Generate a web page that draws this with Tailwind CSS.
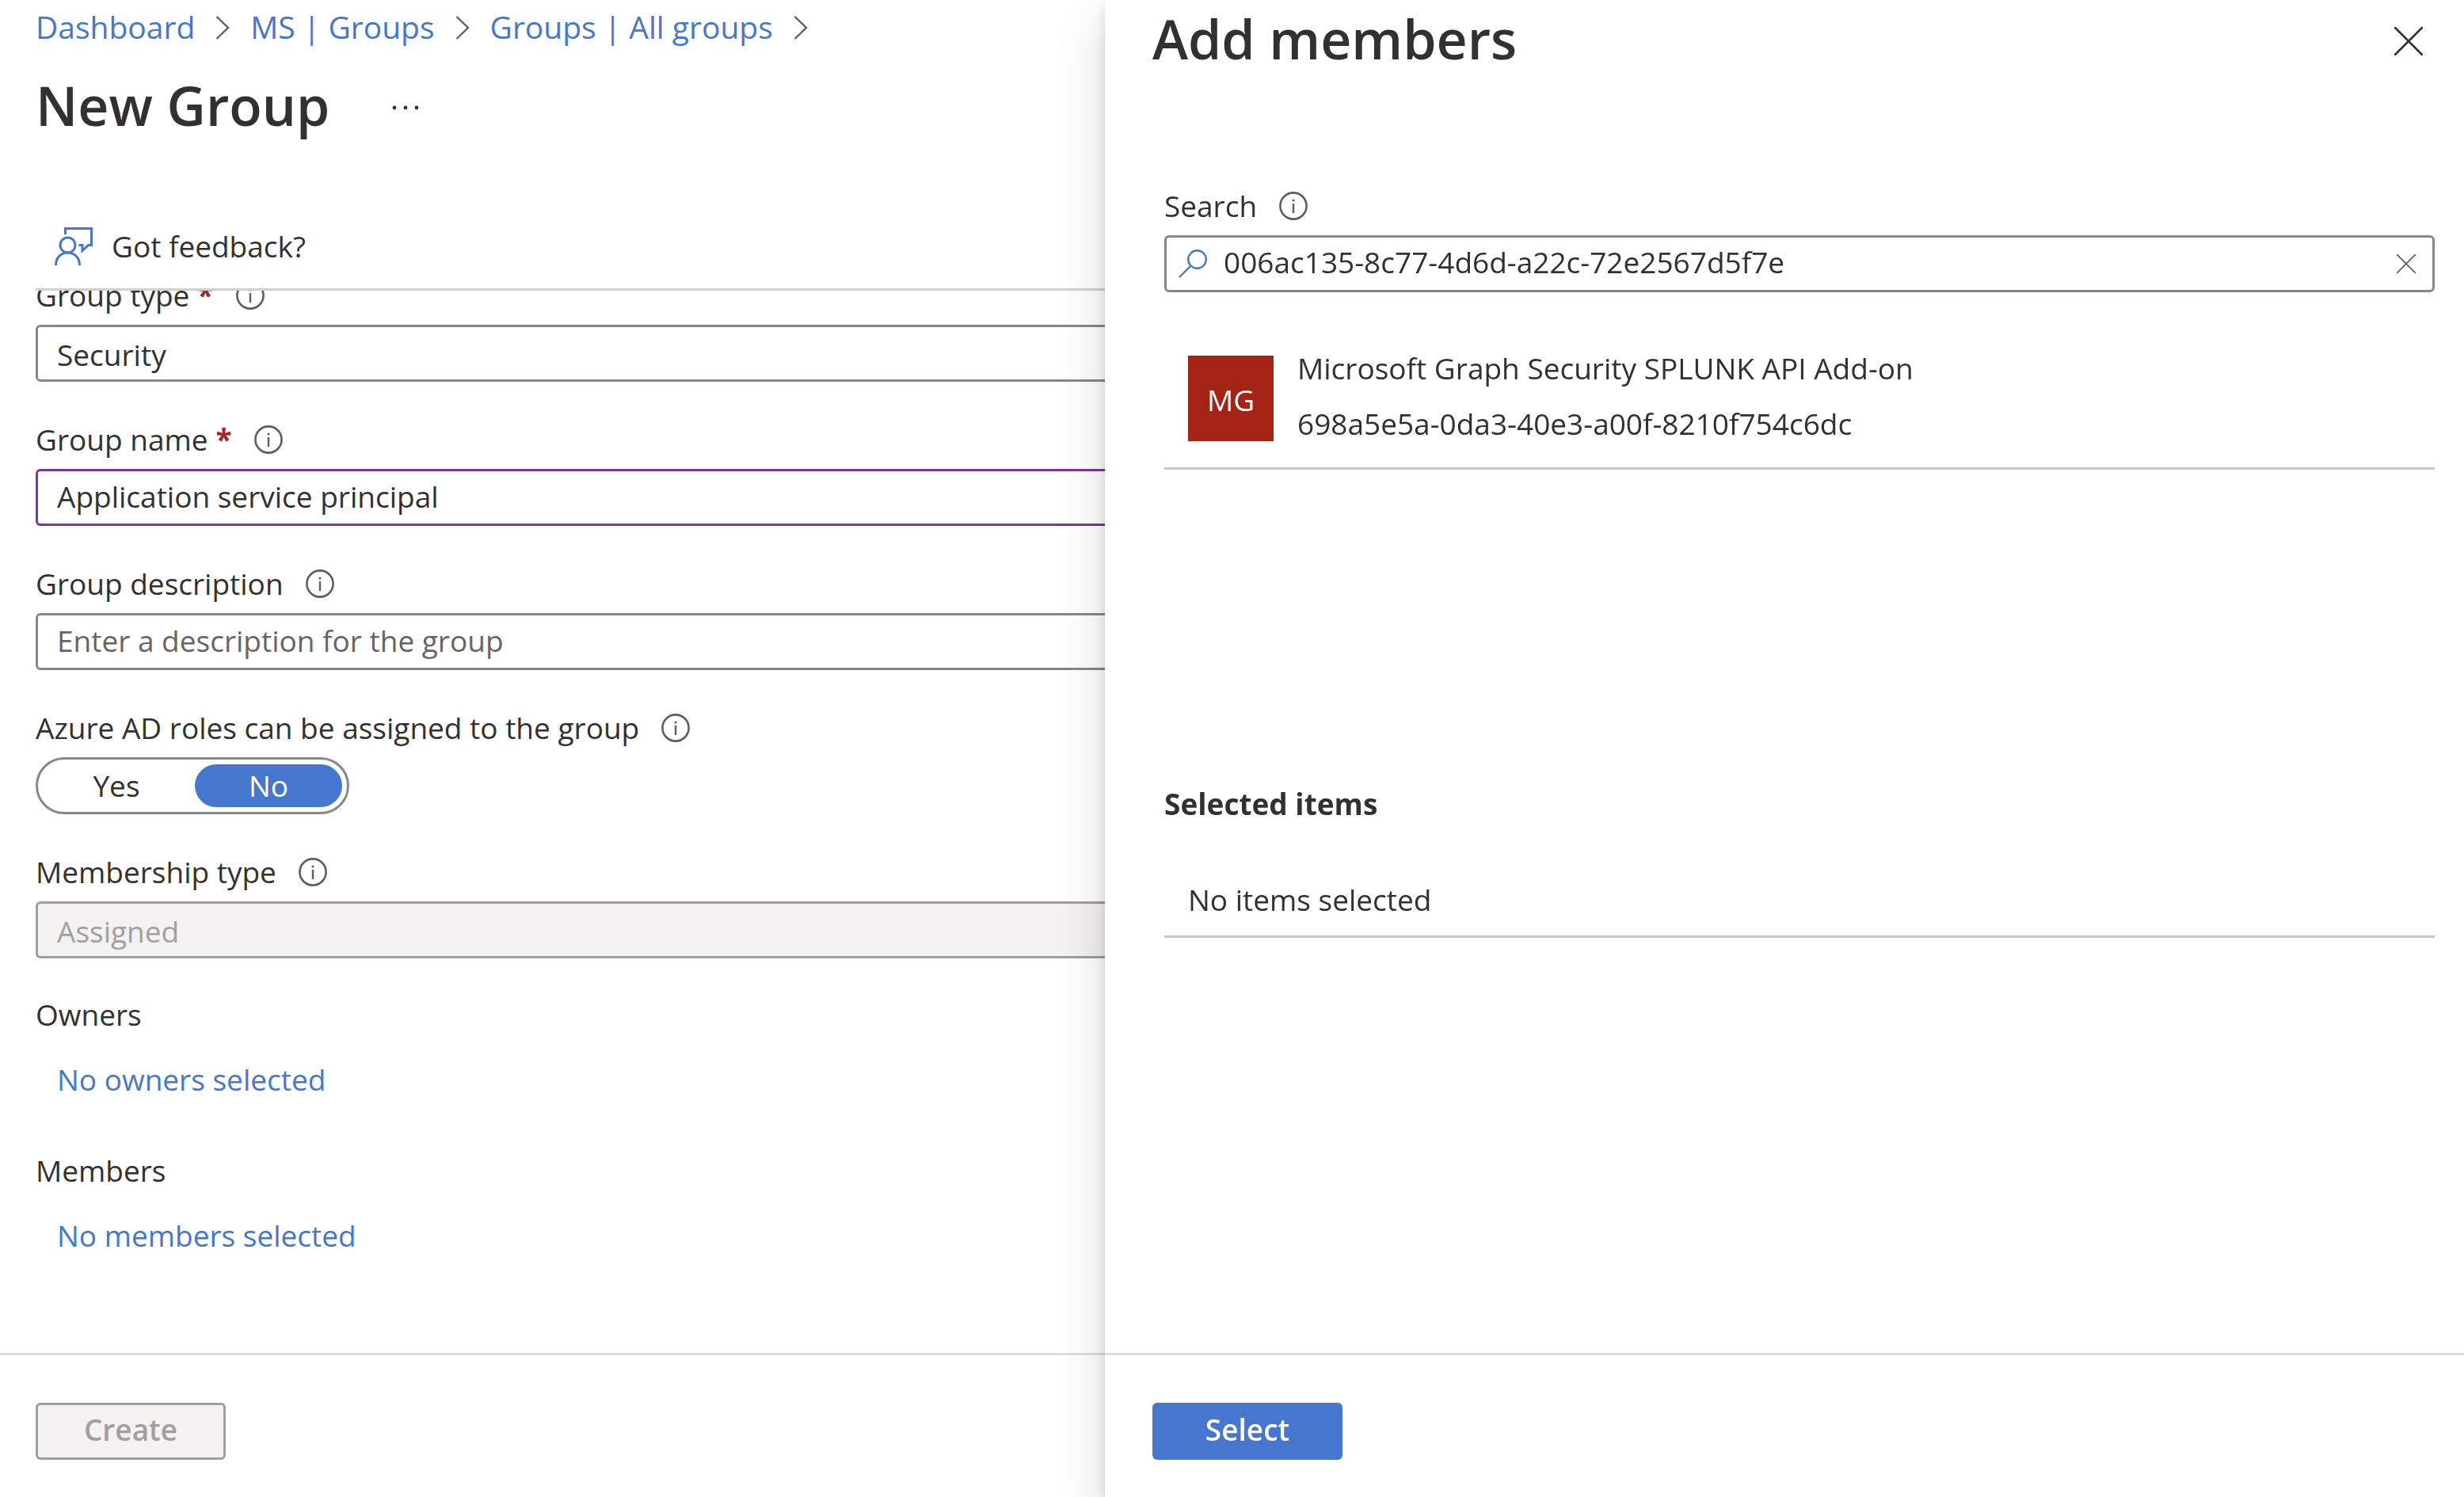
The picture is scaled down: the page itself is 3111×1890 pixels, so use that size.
<!DOCTYPE html>
<html lang="en">
<head>
    <meta charset="UTF-8" />
    <meta name="viewport" content="width=device-width, initial-scale=1.0" />
    <title>New Group</title>
    <script src="https://cdn.jsdelivr.net/npm/@tailwindcss/browser@4"></script>
</head>
<body class="bg-white text-[#323130] font-['Open_Sans',sans-serif] text-[37px] leading-[50px] overflow-hidden">
    <!-- shared icons -->
    <svg class="hidden" aria-hidden="true">
        <symbol id="icon-info" viewBox="0 0 36 36">
            <circle cx="18" cy="18" r="16.6" fill="none" stroke="currentColor" stroke-width="2.6" />
            <path d="M18 15v12" stroke="currentColor" stroke-width="2.4" />
            <circle cx="18" cy="11" r="1.6" fill="currentColor" />
        </symbol>
        <symbol id="icon-chevron" viewBox="0 0 18 30">
            <path d="M1.5 1 16 15 1.5 29" fill="none" stroke="currentColor" stroke-width="2.4" />
        </symbol>
        <symbol id="icon-close" viewBox="0 0 36 36">
            <path d="M1 1l34 34M35 1 1 35" fill="none" stroke="currentColor" stroke-width="2.6" stroke-linecap="round" />
        </symbol>
    </svg>

    <main class="flex flex-col h-screen">
        <nav class="flex items-center gap-[26px] h-[69px] pl-[45px] text-[39px] text-[#4677cf]" aria-label="Breadcrumb">
            <a href="#" class="pb-0.5">Dashboard</a>
            <svg class="w-[18px] h-[30px] text-[#605e5c]"><use href="#icon-chevron" /></svg>
            <a href="#" class="pb-0.5">MS | Groups</a>
            <svg class="w-[18px] h-[30px] text-[#605e5c]"><use href="#icon-chevron" /></svg>
            <a href="#" class="pb-0.5">Groups | All groups</a>
            <svg class="w-[18px] h-[30px] text-[#605e5c]"><use href="#icon-chevron" /></svg>
        </nav>

        <div class="flex items-center gap-[78px] h-[132px] pl-[45px]">
            <h1 class="pb-1 text-[68px] leading-[96px] font-semibold">New Group</h1>
            <button type="button" aria-label="More">
                <svg class="w-9 h-9" viewBox="0 0 36 36" fill="currentColor">
                    <circle cx="4" cy="19" r="2.4" />
                    <circle cx="18" cy="19" r="2.4" />
                    <circle cx="32" cy="19" r="2.4" />
                </svg>
            </button>
        </div>

        <div class="ml-[45px] mt-[60px] h-[106px] pl-6 pb-1 border-b-3 border-[#d2d0ce] flex items-center">
            <button type="button" class="flex items-center gap-6">
                <svg class="w-12 h-12 text-[#4677cf]" viewBox="0 0 48 48" fill="none" stroke="currentColor" stroke-width="3">
                    <path d="M13.500 9V1.500H46.500V22.500H42.500L35 29.500V22.500H30.500" />
                    <circle cx="16.500" cy="22.500" r="9.500" />
                    <path d="M1.500 48C1.500 38 8 32 16.500 32S31.500 38 31.500 48" />
                </svg>
                Got feedback?
            </button>
        </div>

        <form id="new-group" class="flex-1 min-h-0 overflow-hidden pl-[45px] pr-9">
            <!-- scrolled slightly under the toolbar -->
            <div class="-mt-[19px] mb-12">
                <div class="flex items-center mb-3">
                    <label for="group-type">Group type</label>
                    <span class="ml-2.5 font-bold text-[#a4262c]">*</span>
                    <svg class="ml-7 w-9 h-9 text-[#605e5c]"><use href="#icon-info" /></svg>
                </div>
                <select id="group-type" class="block w-full h-[72px] px-6 pt-1 appearance-none border-3 border-[#8a8886] rounded-md bg-white">
                    <option>Security</option>
                </select>
            </div>

            <div class="mb-12">
                <div class="flex items-center mb-3">
                    <label for="group-name">Group name</label>
                    <span class="ml-2.5 font-bold text-[#a4262c]">*</span>
                    <svg class="ml-7 w-9 h-9 text-[#605e5c]"><use href="#icon-info" /></svg>
                </div>
                <input id="group-name" type="text" value="Application service principal" class="block w-full h-[72px] px-6 pb-1 border-3 border-[#7f33a0] rounded-md" />
            </div>

            <div class="mb-12">
                <div class="flex items-center mb-3">
                    <label for="group-description">Group description</label>
                    <svg class="ml-7 w-9 h-9 text-[#605e5c]"><use href="#icon-info" /></svg>
                </div>
                <input id="group-description" type="text" placeholder="Enter a description for the group" class="block w-full h-[72px] px-6 pb-1 border-3 border-[#8a8886] rounded-md placeholder:text-[#666564]" />
            </div>

            <fieldset class="mb-12">
                <div class="flex items-center mb-3">
                    <legend>Azure AD roles can be assigned to the group</legend>
                    <svg class="ml-7 w-9 h-9 text-[#605e5c]"><use href="#icon-info" /></svg>
                </div>
                <div class="inline-flex align-top gap-1.5 h-[72px] p-1.5 border-3 border-[#8a8886] rounded-full text-center leading-[54px]">
                    <label class="w-[186px] rounded-full has-checked:bg-[#4677cf] has-checked:text-white">
                        <input type="radio" name="roles" value="yes" class="sr-only" />Yes
                    </label>
                    <label class="w-[186px] rounded-full has-checked:bg-[#4677cf] has-checked:text-white">
                        <input type="radio" name="roles" value="no" class="sr-only" checked />No
                    </label>
                </div>
            </fieldset>

            <div class="mb-[46px]">
                <div class="flex items-center mb-3">
                    <label for="membership-type">Membership type</label>
                    <svg class="ml-7 w-9 h-9 text-[#605e5c]"><use href="#icon-info" /></svg>
                </div>
                <select id="membership-type" disabled class="block w-full h-[72px] px-6 pt-1 appearance-none border-3 border-[#a19f9d] rounded-md bg-[#f3f2f1] text-[#a19f9d] opacity-100">
                    <option>Assigned</option>
                </select>
            </div>

            <div class="mb-[65px]">
                <p class="mb-8">Owners</p>
                <a href="#" class="block ml-[27px] text-[#4677cf]">No owners selected</a>
            </div>
            <div>
                <p class="mb-8">Members</p>
                <a href="#" class="block ml-[27px] text-[#4677cf]">No members selected</a>
            </div>
        </form>

        <footer class="pl-[45px] pt-[60px] pb-[47px] border-t-3 border-[#e1dfdd]">
            <button type="submit" form="new-group" disabled class="block w-[240px] h-[72px] pb-1 border-3 border-[#a19f9d] rounded-md bg-[#f3f2f1] text-[#a19f9d] font-semibold">Create</button>
        </footer>
    </main>

    <!-- context panel, slides over the form -->
    <aside class="fixed inset-y-0 right-0 w-[1716px] flex flex-col bg-white shadow-[0_26px_58px_rgba(0,0,0,0.16),0_5px_14px_rgba(0,0,0,0.12)]">
        <header class="flex items-center justify-between h-[104px] pl-[60px] pr-[52px]">
            <h2 class="pb-1.5 text-[68px] leading-[96px] font-semibold">Add members</h2>
            <button type="button" aria-label="Close">
                <svg class="w-9 h-9"><use href="#icon-close" /></svg>
            </button>
        </header>

        <div class="flex-1 pl-[75px] pr-[37px] pt-[131px]">
            <div class="flex items-center mb-3">
                <label for="search">Search</label>
                <svg class="ml-7 w-9 h-9 text-[#605e5c]"><use href="#icon-info" /></svg>
            </div>
            <div class="flex items-center h-[72px] px-[15px] border-3 border-[#8a8886] rounded-md">
                <svg class="w-9 h-9 mr-[21px] text-[#4677cf]" viewBox="0 0 36 36" fill="none" stroke="currentColor" stroke-width="2.4">
                    <circle cx="23.500" cy="12.500" r="11.300" />
                    <path d="M15.500 20.500 1 35" />
                </svg>
                <input id="search" type="text" value="006ac135-8c77-4d6d-a22c-72e2567d5f7e" class="flex-1 pb-1 outline-none" />
                <button type="button" aria-label="Clear" class="mr-1.5">
                    <svg class="w-6 h-6 text-[#605e5c]"><use href="#icon-close" /></svg>
                </button>
            </div>

            <ul>
                <li class="mt-[61px] pb-5 pl-[30px] flex items-center gap-[30px] border-b-3 border-[#c8c8c8]">
                    <span class="w-[108px] h-[108px] mt-1.5 pt-1 flex items-center justify-center bg-[#a52315] text-white">MG</span>
                    <div class="leading-[70px]">
                        <p>Microsoft Graph Security SPLUNK API Add-on</p>
                        <p>698a5e5a-0da3-40e3-a00f-8210f754c6dc</p>
                    </div>
                </li>
            </ul>

            <h3 class="mt-[397px] font-bold">Selected items</h3>
            <p class="mt-[71px] pl-[30px] pb-5 border-b-3 border-[#c8c8c8]">No items selected</p>
        </div>

        <footer class="pl-[60px] pt-[60px] pb-[47px] border-t-3 border-[#e1dfdd]">
            <button type="button" class="block w-[240px] h-[72px] pb-1 rounded-md bg-[#4677cf] text-white font-semibold">Select</button>
        </footer>
    </aside>
</body>
</html>
